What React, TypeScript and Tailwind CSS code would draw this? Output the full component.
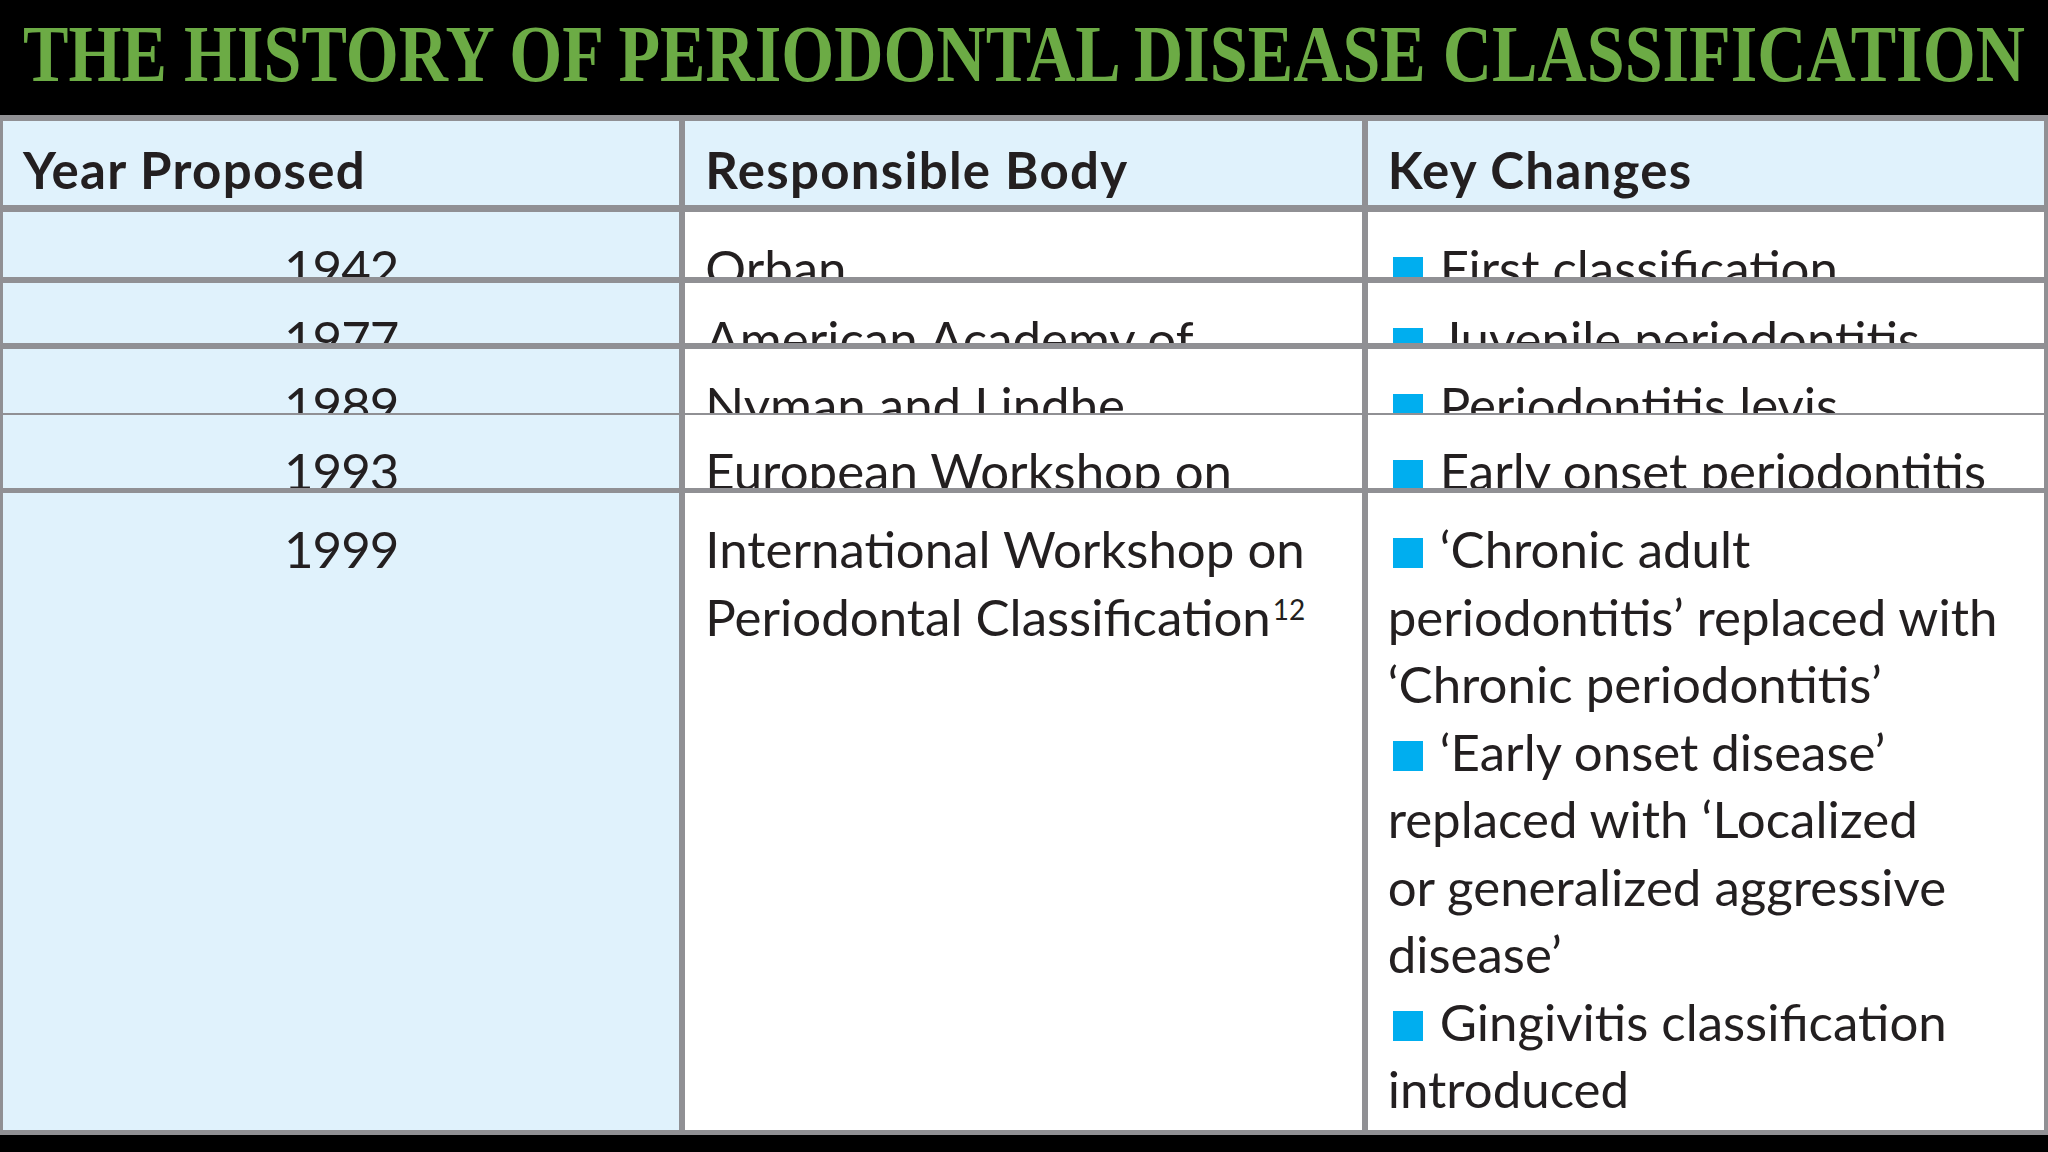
const bodyFont = { fontFamily: 'Lato, "Open Sans", sans-serif' }

type Row = {
  year: string
  body: string[]
  changes: { bullet: boolean; lines: string[] }[]
  height: string
  gap: string
}

const rows: Row[] = [
  {
    year: '1942',
    body: ['Orban'],
    changes: [{ bullet: true, lines: ['First classification'] }],
    height: 'h-[65px]',
    gap: 'mt-[7px]',
  },
  {
    year: '1977',
    body: ['American Academy of'],
    changes: [{ bullet: true, lines: ['Juvenile periodontitis'] }],
    height: 'h-[60px]',
    gap: 'mt-[6px]',
  },
  {
    year: '1989',
    body: ['Nyman and Lindhe'],
    changes: [{ bullet: true, lines: ['Periodontitis levis'] }],
    height: 'h-[64px]',
    gap: 'mt-[6px]',
  },
  {
    year: '1993',
    body: ['European Workshop on'],
    changes: [{ bullet: true, lines: ['Early onset periodontitis'] }],
    height: 'h-[73px]',
    gap: 'mt-[2px]',
  },
]

function Bullet() {
  return <span className="ml-[5px] mr-[17px] inline-block h-[30px] w-[30px] bg-[#00aeef]" />
}

function Lines({ lines }: { lines: string[] }) {
  return (
    <>
      {lines.map((line, i) => (
        <span key={i}>
          {i > 0 && <br />}
          {line}
        </span>
      ))}
    </>
  )
}

function Changes({ items }: { items: Row['changes'] }) {
  return (
    <>
      {items.map((item, i) => (
        <div key={i}>
          {item.bullet && <Bullet />}
          <Lines lines={item.lines} />
        </div>
      ))}
    </>
  )
}

const cell = 'overflow-hidden pt-[22px] pl-[20px] text-[51px] leading-[67.5px] text-[#231f20]'

export default function App() {
  return (
    <div className="flex h-[1152px] w-[2048px] flex-col overflow-hidden bg-black">
      <div className="h-[115px] shrink-0 pl-[23px] pt-[14px]">
        <h1
          className="inline-block origin-left scale-x-[0.852] whitespace-nowrap text-[80px] font-bold leading-[80px] text-[#6cab45]"
          style={{ fontFamily: '"Liberation Serif", "Times New Roman", serif' }}
        >
          THE HISTORY OF PERIODONTAL DISEASE CLASSIFICATION
        </h1>
      </div>

      <div className="flex flex-col bg-[#909094] pb-[5px] pl-[3px] pr-[4px] pt-[6px]" style={bodyFont}>
        <div className="grid h-[84px] grid-cols-3 gap-x-[6px]">
          {['Year Proposed', 'Responsible Body', 'Key Changes'].map((h) => (
            <div
              key={h}
              className="bg-[#e0f2fc] pl-[20px] pt-[15px] text-[51px] font-bold leading-[67.5px] tracking-[0.025em] text-[#231f20]"
            >
              {h}
            </div>
          ))}
        </div>

        {rows.map((r) => (
          <div key={r.year} className={`grid grid-cols-3 gap-x-[6px] ${r.height} ${r.gap}`}>
            <div className={`${cell} bg-[#e0f2fc] !pl-0 text-center tracking-[-0.02em]`}>{r.year}</div>
            <div className={`${cell} bg-white`}>
              <Lines lines={r.body} />
            </div>
            <div className={`${cell} bg-white`}>
              <Changes items={r.changes} />
            </div>
          </div>
        ))}

        <div className="mt-[5px] grid h-[637px] grid-cols-3 gap-x-[6px]">
          <div className={`${cell} bg-[#e0f2fc] !pl-0 text-center tracking-[-0.02em]`}>1999</div>
          <div className={`${cell} bg-white`}>
            International Workshop on
            <br />
            Periodontal Classification
            <sup className="ml-[2px] text-[28px] align-[2px]">12</sup>
          </div>
          <div className={`${cell} bg-white`}>
            <Changes
              items={[
                { bullet: true, lines: ['\u2018Chronic adult', 'periodontitis\u2019 replaced with', '\u2018Chronic periodontitis\u2019'] },
                { bullet: true, lines: ['\u2018Early onset disease\u2019', 'replaced with \u2018Localized', 'or generalized aggressive', 'disease\u2019'] },
                { bullet: true, lines: ['Gingivitis classification', 'introduced'] },
              ]}
            />
          </div>
        </div>
      </div>
    </div>
  )
}
